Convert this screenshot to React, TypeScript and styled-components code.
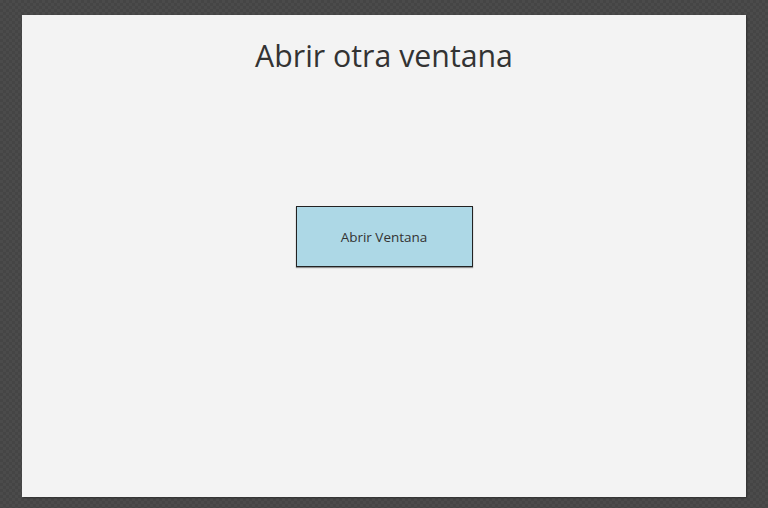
import styled, { createGlobalStyle } from 'styled-components';

const GlobalStyle = createGlobalStyle`
  html, body {
    margin: 0;
    padding: 0;
    height: 100%;
  }
  body {
    font-family: "Open Sans", "Noto Sans", sans-serif;
    background-color: #4b4b4b;
    background-image:
      linear-gradient(45deg, #454545 25%, transparent 25%, transparent 75%, #454545 75%),
      linear-gradient(45deg, #454545 25%, transparent 25%, transparent 75%, #454545 75%);
    background-size: 6px 6px;
    background-position: 0 0, 3px 3px;
  }
  #root {
    height: 100%;
  }
`;

const App = () => {
  return (
    <>
      <GlobalStyle />
      <Frame>
        <Window>
          <Title>Abrir otra ventana</Title>
          <Center>
            <OpenButton type="button">Abrir Ventana</OpenButton>
          </Center>
        </Window>
      </Frame>
    </>
  );
};

export default App;

const Frame = styled.div`
  box-sizing: border-box;
  height: 508px;
  padding: 15px 22px 11px;
  display: flex;
`;

const Window = styled.main`
  flex: 1;
  background: #f3f3f3;
  box-shadow: 1px 1px 2px rgba(0, 0, 0, 0.35);
  display: flex;
  flex-direction: column;
  align-items: center;
`;

const Title = styled.h1`
  margin: 21px 0 0;
  font-size: 30.3px;
  font-weight: 400;
  line-height: 40px;
  color: #333333;
`;

const Center = styled.div`
  padding-top: 130px;
`;

const OpenButton = styled.button`
  width: 177px;
  height: 61px;
  box-sizing: border-box;
  border: 1px solid #222222;
  background: #add8e6;
  box-shadow: 0 1px 1px rgba(0, 0, 0, 0.4);
  font-family: "Open Sans", "Noto Sans", sans-serif;
  font-size: 13.5px;
  color: #333333;
  padding: 0;
`;
